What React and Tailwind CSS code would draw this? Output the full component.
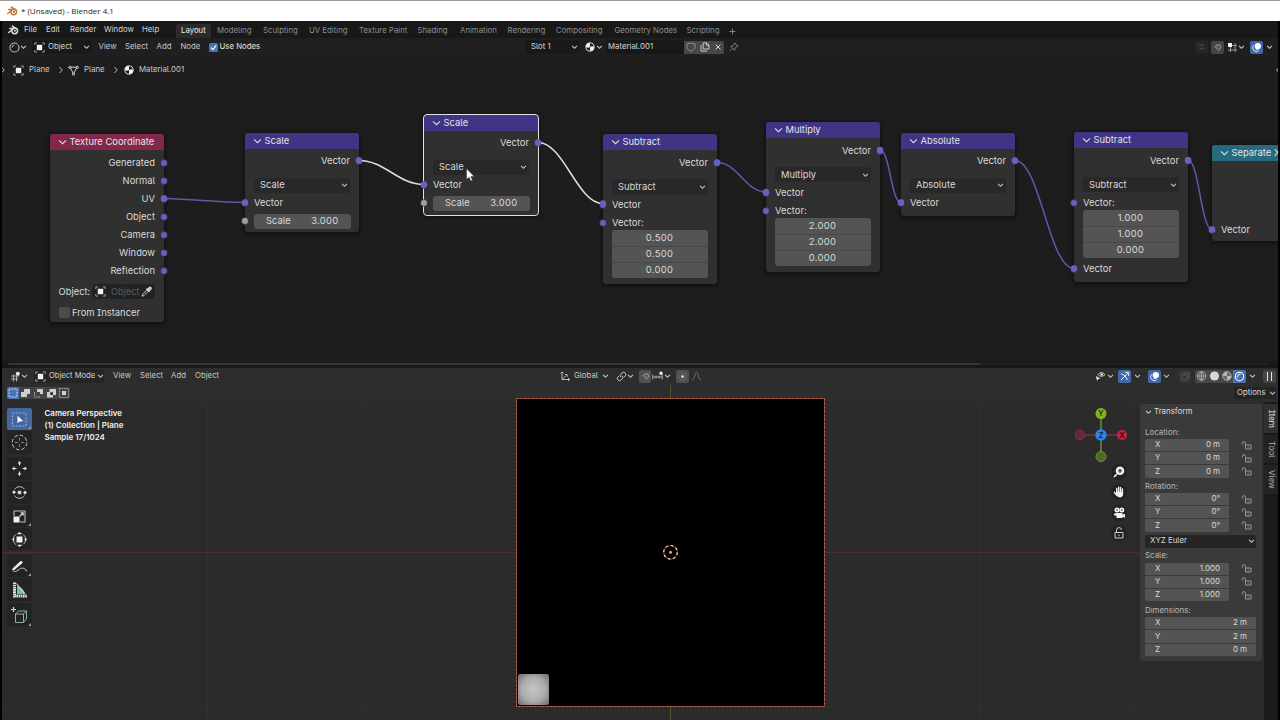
import React from "react";

/* ---------- small drawing helpers ---------- */

function Svg({ w, h, cls = "", children }) {
  return (
    <svg width={w} height={h} viewBox={`0 0 ${w} ${h}`} fill="none" className={`shrink-0 ${cls}`}>
      {children}
    </svg>
  );
}

function Chevron({ cls = "" }) {
  return (
    <Svg w={7} h={6} cls={cls}>
      <path d="M1.1 1.900l2.400 2.400L5.900 1.900" stroke="#c8c8c8" strokeWidth="1.1" />
    </Svg>
  );
}

function BigChevron({ cls = "" }) {
  return (
    <Svg w={9} h={8} cls={cls}>
      <path d="M1 2.3l3.5 3.4L8 2.3" stroke="#dcdcdc" strokeWidth="1.1" />
    </Svg>
  );
}

function RightChevron({ cls = "" }) {
  return (
    <Svg w={6} h={8} cls={cls}>
      <path d="M1.3 1l3 3-3 3" stroke="#bdbdbd" strokeWidth="1" />
    </Svg>
  );
}

function BlenderLogo({ color, center }) {
  return (
    <Svg w={11} h={10}>
      <circle cx="6.7" cy="5.8" r="2.9" stroke={color} strokeWidth="1.5" />
      <circle cx="6.9" cy="5.8" r="1" fill={center} />
      <path d="M.6 7.6l4.2-3.4M1.7 3.5h4.6M4.2 .9l4.2 3" stroke={color} strokeWidth="1.3" strokeLinecap="round" />
    </Svg>
  );
}

function ObjectIcon({ cls = "" }) {
  return (
    <Svg w={11} h={11} cls={cls}>
      <rect x="2.800" y="2.800" width="5.400" height="5.400" fill="#f2f2f2" />
      <path d="M.8 3V.9H3M8 .9h2.2V3M10.2 8v2.1H8M3 10.1H.8V8" stroke="#9c9c9c" strokeWidth="1" />
    </Svg>
  );
}

function MaterialIcon({ cls = "" }) {
  return (
    <Svg w={10} h={10} cls={cls}>
      <circle cx="5" cy="5" r="4.1" stroke="#e4e4e4" strokeWidth="1" />
      <path d="M5 .9a4.1 4.1 0 0 0-4.1 4.1c1.6 1 3 .8 4.1 0z" fill="#f2f2f2" />
      <path d="M5 5c1.3-1 3-1 4.1 0A4.1 4.1 0 0 1 5 9.1z" fill="#f2f2f2" />
    </Svg>
  );
}

function MeshIcon({ cls = "" }) {
  return (
    <Svg w={11} h={11} cls={cls}>
      <path d="M2 2.2h7L5.5 8.8z" stroke="#cfcfcf" strokeWidth="1" />
      <circle cx="1.9" cy="2.2" r="1.5" fill="#cfcfcf" />
      <circle cx="9.1" cy="2.2" r="1.5" fill="#cfcfcf" />
      <circle cx="5.5" cy="9" r="1.5" fill="#cfcfcf" />
      <circle cx="1.9" cy="2.2" r=".6" fill="#222" />
      <circle cx="9.1" cy="2.2" r=".6" fill="#222" />
      <circle cx="5.5" cy="9" r=".6" fill="#222" />
    </Svg>
  );
}

function ShaderEditorIcon() {
  return (
    <Svg w={11} h={11}>
      <circle cx="5.5" cy="5.5" r="4.5" stroke="#b9b9b9" strokeWidth="1.1" />
      <path d="M3 5.4A2.8 2.8 0 0 1 5.4 3" stroke="#b9b9b9" strokeWidth="1" />
      <path d="M8.8 2.2l1.3-1.3" stroke="#1d1d1d" strokeWidth="1.6" />
    </Svg>
  );
}

function MagnetIcon() {
  return (
    <Svg w={9} h={9}>
      <path d="M1.700 4.300L4 2.200a2.300 2.300 0 0 1 3.200 3.200L5 7.700M3.300 6L5 4.200" stroke="#8b8b8b" strokeWidth="1.4" />
    </Svg>
  );
}

function OverlayIcon() {
  return (
    <Svg w={11} h={11}>
      <circle cx="6.8" cy="4.2" r="3.1" fill="#fff" />
      <path d="M2.8 3.3A3.4 3.4 0 1 0 7.8 8.6" stroke="#e7ecf5" strokeWidth="1" />
      <path d="M4.6 7.4h2.2" stroke="#e7ecf5" strokeWidth="1" />
    </Svg>
  );
}

/* ---------- bars at the top ---------- */

const menus = [
  ["File", "w-[22px]"],
  ["Edit", "w-[24px]"],
  ["Render", "w-[34px]"],
  ["Window", "w-[38px]"],
  ["Help", "w-[33px]"],
];

const tabs = [
  ["Modeling", "w-[46px]"],
  ["Sculpting", "w-[46px]"],
  ["UV Editing", "w-[50px]"],
  ["Texture Paint", "w-[58.5px]"],
  ["Shading", "w-[42.5px]"],
  ["Animation", "w-[47.5px]"],
  ["Rendering", "w-[48.5px]"],
  ["Compositing", "w-[58.5px]"],
  ["Geometry Nodes", "w-[72px]"],
  ["Scripting", "w-[42px]"],
];

function TitleBar() {
  return (
    <div className="flex h-[21px] shrink-0 items-center border-t border-[#9d9ba0] bg-white pl-[7px] text-[8px] text-[#1c1c1c]">
      <BlenderLogo color="#c9752d" center="#2d5a9a" />
      <span className="ml-[3px] font-['Open_Sans',sans-serif] whitespace-pre">* (Unsaved) - Blender 4.1</span>
    </div>
  );
}

function MenuBar() {
  return (
    <div className="flex h-[17px] shrink-0 items-center bg-[#181818] pl-[8px] text-[7.800px] text-[#d2d2d2]">
      <BlenderLogo color="#dcdcdc" center="#dcdcdc" />
      <div className="ml-[5px] flex">
        {menus.map(([t, w]) => (
          <span key={t} className={`shrink-0 whitespace-nowrap ${w}`}>{t}</span>
        ))}
      </div>
      <div className="ml-[.5px] flex h-full items-end">
        <div className="flex h-[14px] w-[35px] items-center rounded-t-[2px] bg-[#2b2b2b] pl-[5.5px] text-[#eeeeee]">Layout</div>
        <div className="flex h-[14px] items-center pl-[6.500px] text-[#8e8e8e]">
          {tabs.map(([t, w]) => (
            <span key={t} className={`shrink-0 whitespace-nowrap ${w}`}>{t}</span>
          ))}
          <Svg w={7} h={7}>
            <path d="M3.5.5v6M.5 3.5h6" stroke="#8e8e8e" strokeWidth=".9" />
          </Svg>
        </div>
      </div>
    </div>
  );
}

function NodeHeader() {
  return (
    <div className="flex h-[19px] shrink-0 items-center bg-[#1f1f1f] pb-px pl-[9px] text-[7.800px] text-[#c6c6c6]">
      <ShaderEditorIcon />
      <Chevron />
      <div className="ml-[5px] flex h-[14px] w-[60px] items-center rounded-[2px] bg-[#191919] pl-[2px] text-[#d6d6d6]">
        <ObjectIcon />
        <span className="ml-[3px] w-[35px]">Object</span>
        <Chevron />
      </div>
      <span className="ml-[6.500px] w-[26.5px]">View</span>
      <span className="w-[31.5px]">Select</span>
      <span className="w-[24px]">Add</span>
      <span className="w-[28px]">Node</span>
      <Svg w={9} h={9}>
        <rect width="9" height="9" rx="1.5" fill="#4772b3" />
        <path d="M2 4.6l2 2L7.2 2.3" stroke="#fff" strokeWidth="1.2" />
      </Svg>
      <span className="ml-[2px] w-[305px] whitespace-nowrap text-[#e2e2e2]">Use Nodes</span>
      <div className="flex h-[14px] w-[55px] items-center rounded-[2px] bg-[#191919] pl-[6.500px] text-[#d6d6d6]">
        <span className="w-[40px]">Slot 1</span>
        <Chevron />
      </div>
      <MaterialIcon cls="ml-[5px]" />
      <Chevron cls="ml-[1px]" />
      <div className="ml-[3px] flex h-[14px] w-[78px] items-center rounded-l-[2px] bg-[#181818] pl-[2.5px] text-[#d6d6d6]">Material.001</div>
      <div className="flex h-[13px] w-[40px] items-center justify-around rounded-r-[2px] bg-[#474747]">
        <Svg w={10} h={10}>
          <path d="M5 .9L9 2v3.2C9 7.2 7 8.6 5 9.3 3 8.6 1 7.2 1 5.200V2z" stroke="#8f8f8f" strokeWidth="1" />
        </Svg>
        <Svg w={10} h={10}>
          <path d="M3.200.9h3.500L9 3v4H3.200zM6.400 1v2.300H9M1 3v6.100h6" stroke="#c9c9c9" strokeWidth="1" />
        </Svg>
        <Svg w={8} h={8}>
          <path d="M1.500 1.500l5 5m0-5l-5 5" stroke="#d4d4d4" strokeWidth="1" />
        </Svg>
      </div>
      <Svg w={10} h={10} cls="ml-[5px]">
        <path d="M5.700.9L9.100 4.300 7.700 4.600 6 6.300l-.3 2L1.800 4.300l2-.3L5.500 2.300zM3.500 6.400L.8 9.200" stroke="#8e8e8e" strokeWidth=".9" />
      </Svg>
      <div className="ml-auto flex h-[13px] items-center pr-[7.500px]">
        <div className="flex h-[12px] w-[12px] items-center justify-center bg-[#272727]">
          <Svg w={8} h={8}><path d="M1 2h6M1 5.500h6M4 1v6" stroke="#444" strokeWidth="1" /></Svg>
        </div>
        <div className="ml-[3px] flex h-[13px] w-[13px] items-center justify-center rounded-[2px] bg-[#454545]"><MagnetIcon /></div>
        <Svg w={11} h={11} cls="ml-[3px]">
          <path d="M3.500 3v7M8 1v9M3 3.500h7M1 8h9" stroke="#a2a2a2" strokeWidth=".9" />
          <rect x="1" y="1" width="4" height="4" fill="#f4f4f4" />
        </Svg>
        <Chevron />
        <div className="ml-[5px] flex h-[13px] w-[13px] items-center justify-center rounded-[2px] bg-[#4067a8]"><OverlayIcon /></div>
        <Chevron cls="ml-[3px]" />
      </div>
    </div>
  );
}

/* ---------- shader nodes ---------- */

const socketSides = {
  left: "left-[-4px]",
  right: "right-[-4px]",
};

function Socket({ side, grey }) {
  return (
    <svg className={`absolute top-[5px] ${socketSides[side]}`} width="8" height="8" viewBox="0 0 8 8">
      <circle cx="4" cy="4" r="3.400" fill={grey ? "#a1a1a1" : "#6c60bb"} stroke="#232038" strokeWidth=".5" />
    </svg>
  );
}

function Output({ label = "Vector" }) {
  return (
    <div className="relative flex h-[18px] items-center justify-end pr-[9px]">
      {label}
      <Socket side="right" />
    </div>
  );
}

function Input({ label = "Vector" }) {
  return (
    <div className="relative flex h-[18px] items-center pl-[9px]">
      {label}
      <Socket side="left" />
    </div>
  );
}

function Select({ label }) {
  return (
    <div className="mt-[6px] flex h-[18px] items-center px-[9px]">
      <div className="flex h-[15px] w-full items-center justify-between rounded-[3px] bg-[#282828] pr-[2px] pl-[6px]">
        {label}
        <Chevron />
      </div>
    </div>
  );
}

function ValueField() {
  return (
    <div className="relative flex h-[18px] items-center px-[8.500px]">
      <div className="flex h-[15px] w-full items-center justify-between rounded-[3px] bg-[#545454] pr-[12px] pl-[12.500px]">
        <span>Scale</span>
        <span className="tracking-[0.300px]">3.000</span>
      </div>
      <Socket side="left" grey />
    </div>
  );
}

function VectorFields({ values }) {
  return (
    <div className="mx-[9px] mt-[-1.500px] overflow-hidden rounded-[3px] bg-[#545454]">
      {values.map((v, i) => (
        <div key={i} className="flex h-[16px] items-center justify-center border-t border-[#464646] pr-[1px] pb-px tracking-[0.300px] first:border-transparent">
          {v}
        </div>
      ))}
    </div>
  );
}

function Node({ title, place, head = "bg-[#3f3584]", selected, children }) {
  return (
    <div
      className={`absolute w-[114px] rounded-[3px] bg-[#303030] text-[#dadada] shadow-[0_1px_4px_1px_rgba(0,0,0,0.500)] ${place} ${
        selected ? "outline outline-[1.300px] outline-[#e2e2e2]" : ""
      }`}
    >
      <div className={`flex h-[16px] items-center rounded-t-[3px] pl-[8px] whitespace-nowrap text-[#e4e4e4] ${head}`}>
        <BigChevron />
        <span className="ml-[2.500px]">{title}</span>
      </div>
      <div className="pt-[3.500px]">{children}</div>
    </div>
  );
}

const links = [
  { d: "M164 198.500C195 199 215 202.500 245 202.500", white: false },
  { d: "M359 160.500C385 160.500 398 184.500 424 184.500", white: true },
  { d: "M538 142.500C564 142.500 577 203.500 603 203.500", white: true },
  { d: "M717 162.500C738 162.500 745 192 766 192", white: false },
  { d: "M880 150C890 150 891 202.500 901 202.500", white: false },
  { d: "M1015 160.500C1040 160.500 1049 268.500 1074 268.500", white: false },
  { d: "M1188 160C1199 160 1201 229.500 1212 229.500", white: false },
];

function NodeEditor() {
  return (
    <div className="relative h-[305px] shrink-0 overflow-hidden bg-[#1d1d1d] text-[9.400px]">
      <div className="flex h-[26px] items-center text-[7.800px] text-[#c9c9c9]">
        <RightChevron />
        <ObjectIcon cls="ml-[7px]" />
        <span className="ml-[5px] w-[29px]">Plane</span>
        <RightChevron />
        <MeshIcon cls="ml-[4px]" />
        <span className="ml-[5px] w-[29px]">Plane</span>
        <RightChevron />
        <MaterialIcon cls="ml-[5px]" />
        <span className="ml-[5px]">Material.001</span>
        <Svg w={6} h={8} cls="ml-auto mr-[-1px]">
          <path d="M4.500 1l-3 3 3 3" stroke="#bdbdbd" strokeWidth="1" />
        </Svg>
      </div>

      <Node title="Texture Coordinate" place="left-[50px] top-[77px] h-[188px]" head="bg-[#81284c]">
        {["Generated", "Normal", "UV", "Object", "Camera", "Window", "Reflection"].map((l) => (
          <Output key={l} label={l} />
        ))}
        <div className="mt-[3px] flex h-[18px] items-center pl-[8.500px]">
          <span className="w-[33.500px]">Object:</span>
          <div className="flex h-[15px] w-[63px] items-center rounded-[3px] bg-[#222222] pl-[3px]">
            <ObjectIcon />
            <span className="ml-[5px] w-[29px] text-[9.200px] text-[#5c5c5c]">Object</span>
            <Svg w={13} h={13}>
              <path d="M2 11.200l.6-2L7 4.800l1.400 1.400L4 10.600z" stroke="#c9c9c9" strokeWidth="1" />
              <path d="M6.500 3.600l3.200 3.200M7.800 4.400l2-2a1.100 1.100 0 0 1 1.300 1.300l-2 2z" stroke="#dadada" strokeWidth="1.500" />
            </Svg>
          </div>
        </div>
        <div className="mt-[3px] flex h-[18px] items-center pl-[8.500px] whitespace-nowrap">
          <span className="mr-[2.500px] h-[11px] w-[11px] rounded-[2px] bg-[#4c4c4c]" />
          From Instancer
        </div>
      </Node>

      <Node title="Scale" place="left-[245px] top-[75.500px] h-[99.500px]">
        <Output />
        <Select label="Scale" />
        <Input />
        <ValueField />
      </Node>

      <Node title="Scale" place="left-[424px] top-[57.500px] h-[100px]" selected>
        <Output />
        <Select label="Scale" />
        <Input />
        <ValueField />
      </Node>

      <Node title="Subtract" place="left-[603px] top-[77px] h-[150px]">
        <Output />
        <Select label="Subtract" />
        <Input />
        <Input label="Vector:" />
        <VectorFields values={["0.500", "0.500", "0.000"]} />
      </Node>

      <Node title="Multiply" place="left-[766px] top-[65px] h-[150px]">
        <Output />
        <Select label="Multiply" />
        <Input />
        <Input label="Vector:" />
        <VectorFields values={["2.000", "2.000", "0.000"]} />
      </Node>

      <Node title="Absolute" place="left-[901px] top-[75.500px] h-[83.500px]">
        <Output />
        <Select label="Absolute" />
        <Input />
      </Node>

      <Node title="Subtract" place="left-[1074px] top-[75px] h-[150px]">
        <Output />
        <Select label="Subtract" />
        <Input label="Vector:" />
        <VectorFields values={["1.000", "1.000", "0.000"]} />
        <div className="mt-[1.500px]">
          <Input />
        </div>
      </Node>

      <Node title="Separate X" place="left-[1212px] top-[88px] h-[96px]" head="bg-[#266a80]">
        <div className="pt-[56px]">
          <Input />
        </div>
      </Node>

      <svg className="absolute inset-0" width="1280" height="305" viewBox="0 57 1280 305" fill="none">
        {links.map((l) => (
          <path key={l.d} d={l.d} stroke={l.white ? "#dedede" : "#6357a6"} strokeWidth="1.500" />
        ))}
        {links.map((l) => {
          const n = l.d.match(/[\d.]+/g).map(Number);
          return (
            <g key={l.d} fill="#6c60bb">
              <circle cx={n[0]} cy={n[1]} r="3.200" />
              <circle cx={n[6]} cy={n[7]} r="3.200" />
            </g>
          );
        })}
        <path d="M466.500 168.500v11l2.600-2.300 1.700 3.800 1.700-.8-1.700-3.600h3.400z" fill="#fff" stroke="#333" strokeWidth=".5" />
      </svg>
    </div>
  );
}

/* ---------- 3D viewport ---------- */

function ViewportHeader() {
  return (
    <div className="flex h-[16px] shrink-0 items-center bg-[#2d2d2d] pl-[10px] text-[7.800px] text-[#c6c6c6]">
      <Svg w={11} h={11}>
        <path d="M1 5h8M1 8h7M3.500 3.500v7M6.500 5v5.500" stroke="#bdbdbd" strokeWidth=".9" />
        <circle cx="7.800" cy="2.700" r="2" fill="#eee" />
      </Svg>
      <Chevron />
      <div className="ml-[6px] flex h-[14px] w-[70px] items-center rounded-[2px] bg-[#252525] pl-[1px] text-[#d6d6d6]">
        <ObjectIcon />
        <span className="ml-[3px] w-[48px] whitespace-nowrap text-[7.600px]">Object Mode</span>
        <Chevron />
      </div>
      <span className="ml-[9px] w-[27px]">View</span>
      <span className="w-[31px]">Select</span>
      <span className="w-[24px]">Add</span>
      <span className="w-[365px]">Object</span>
      <Svg w={11} h={10}>
        <path d="M2 1v7.500h7.500M2 8.500l4-4M.6 2.400L2 .9l1.400 1.500M5 3.600h2.200v2.200M8 7l1.600 1.500L8 9.900" stroke="#c6c6c6" strokeWidth=".9" />
      </Svg>
      <span className="ml-[3px] w-[28px]">Global</span>
      <Chevron />
      <Svg w={11} h={11} cls="ml-[7px]">
        <path d="M4.800 6.200a2.300 2.300 0 0 1 0-3L6.200 1.800a2.200 2.200 0 0 1 3.100 3.100L8 6.200M6.300 4.800a2.300 2.300 0 0 1 0 3L4.900 9.200a2.200 2.200 0 0 1-3.100-3.100L3 4.900" stroke="#c6c6c6" strokeWidth="1" />
      </Svg>
      <Chevron />
      <div className="ml-[5px] flex h-[13px] w-[12px] items-center justify-center rounded-[2px] bg-[#505050]"><MagnetIcon /></div>
      <Svg w={12} h={11} cls="ml-[1px]">
        <path d="M.8 3.500v5M4 4.500v3M7 4.500v3M10.200 3.500v5M.8 6h9.400" stroke="#b8b8b8" strokeWidth=".9" />
        <circle cx="9" cy="2.300" r="1.700" fill="#f0f0f0" />
      </Svg>
      <Chevron />
      <div className="ml-[5px] flex h-[13px] w-[13px] items-center justify-center rounded-[2px] bg-[#505050]">
        <Svg w={9} h={9}>
          <circle cx="4.500" cy="4.500" r="3.500" stroke="#6a6a6a" strokeWidth=".8" />
          <circle cx="4.500" cy="4.500" r="1.300" fill="#e8e8e8" />
        </Svg>
      </div>
      <Svg w={11} h={10} cls="ml-[2px]">
        <path d="M1 8.800C4 8.800 3.600 1.200 5.500 1.200S7 8.800 10 8.800" stroke="#767676" strokeWidth="1" />
      </Svg>
      <div className="ml-auto flex items-center pr-[4px]">
        <Svg w={12} h={11}>
          <path d="M3 3.600C4.500 1.200 8 .9 10 3.600 8 5.800 4.500 5.800 3 3.600z" stroke="#d6d6d6" strokeWidth="1" />
          <circle cx="6.600" cy="3.400" r="1.200" fill="#eee" />
          <path d="M1 5l1 5 1.200-2 2.300-.4z" fill="#eee" />
        </Svg>
        <Chevron />
        <div className="ml-[4px] flex h-[13px] w-[13px] items-center justify-center rounded-[2px] bg-[#4169aa]">
          <Svg w={10} h={10}>
            <path d="M1 9L8.500 1.500M5 1.300h3.700V5M1 2.800C4 3.400 6.600 6 7.200 9" stroke="#e5ebf5" strokeWidth="1" />
          </Svg>
        </div>
        <Chevron cls="ml-[3px]" />
        <div className="ml-[7px] flex h-[13px] w-[13px] items-center justify-center rounded-[2px] bg-[#4169aa]"><OverlayIcon /></div>
        <Chevron cls="ml-[2px]" />
        <div className="ml-[9px] flex h-[13px] w-[12px] items-center justify-center rounded-[2px] bg-[#363636]">
          <Svg w={9} h={9}><path d="M1 3h5v5H1zM3 3V1h5v5H6" stroke="#5c5c5c" strokeWidth=".9" /></Svg>
        </div>
        <div className="ml-[4px] flex h-[13px] items-center rounded-[2px] bg-[#484848]">
          <Svg w={13} h={12}>
            <circle cx="6.500" cy="6" r="4.300" stroke="#bdbdbd" strokeWidth=".9" />
            <path d="M2.200 6h8.600M6.500 1.700v8.600M6.500 1.700c-2.600 2.500-2.600 6 0 8.600M6.500 1.700c2.600 2.500 2.600 6 0 8.600" stroke="#bdbdbd" strokeWidth=".7" />
          </Svg>
          <Svg w={13} h={12}><circle cx="6.500" cy="6" r="4.600" fill="#d6d6d6" /></Svg>
          <Svg w={12} h={12}>
            <circle cx="6" cy="6" r="4.300" fill="#6a6a6a" stroke="#bdbdbd" strokeWidth=".8" />
            <path d="M6 1.700A4.300 4.300 0 0 0 1.700 6H6zM6 6h4.300A4.300 4.300 0 0 1 6 10.300z" fill="#b5b5b5" />
          </Svg>
          <div className="flex h-[13px] w-[13px] items-center justify-center rounded-r-[2px] bg-[#4772b3]">
            <Svg w={11} h={11}>
              <circle cx="5.500" cy="5.500" r="4.200" stroke="#fff" strokeWidth="1.100" />
              <path d="M3.200 6.500A3.200 3.200 0 0 1 6.600 3.200" stroke="#fff" strokeWidth="1" />
            </Svg>
          </div>
        </div>
        <Chevron cls="ml-[3px]" />
        <div className="ml-[7px] flex h-[13px] w-[13px] items-center justify-center gap-[2.500px] rounded-[2px] bg-[#454545]">
          <span className="h-[9px] w-[1.500px] bg-[#e2e2e2]" />
          <span className="h-[9px] w-[1.500px] bg-[#e2e2e2]" />
        </div>
      </div>
    </div>
  );
}

function SelectModes() {
  return (
    <div className="flex h-[18px] shrink-0 items-center bg-[#2d2d2d] pl-[7px]">
      <div className="flex h-[12px] items-center rounded-[2px] bg-[#444444]">
        <div className="flex h-[12px] w-[12px] items-center justify-center rounded-l-[2px] bg-[#4772b3]">
          <Svg w={10} h={10}><rect x="1" y="1" width="8" height="8" stroke="#dfe8f5" strokeWidth="1" strokeDasharray="1.500 1.200" /></Svg>
        </div>
        <Svg w={13} h={12}><path d="M5 2h6v5H8v3H2V5h3z" fill="#cfcfcf" /></Svg>
        <Svg w={13} h={12}>
          <path d="M5 2h6v5H8V5H5z" fill="#cfcfcf" />
          <path d="M2.500 5v5H8" stroke="#bdbdbd" strokeWidth=".9" strokeDasharray="1.300 1" />
        </Svg>
        <Svg w={13} h={12}>
          <path d="M4.500 2h6.500v6H8v2.500H2V5h2.500z" fill="#cfcfcf" />
          <path d="M5.200 5.200H8V8H5.200z" fill="#333" />
        </Svg>
        <Svg w={12} h={12}>
          <rect x="1.500" y="1.500" width="9" height="9" stroke="#b5b5b5" strokeWidth=".9" strokeDasharray="1.300 1" />
          <rect x="4" y="4" width="4" height="4" fill="#cfcfcf" />
        </Svg>
      </div>
      <div className="mr-[4px] ml-auto flex h-[12px] w-[42px] items-center rounded-[2px] bg-[#242424] pl-[3px] text-[7.800px] text-[#d6d6d6]">
        <span className="w-[32px]">Options</span>
        <Chevron />
      </div>
    </div>
  );
}

function ToolButton({ cls = "", corner, children }) {
  return (
    <div className={`relative flex w-[25px] items-center justify-center rounded-[2px] ${cls}`}>
      <Svg w={19} h={19}>{children}</Svg>
      {corner && (
        <svg className="absolute right-[1px] bottom-[1px]" width="3" height="3" viewBox="0 0 3 3"><path d="M3 0v3H0z" fill="#999" /></svg>
      )}
    </div>
  );
}

function Toolbar() {
  const dark = "bg-[#232323]";
  return (
    <div className="flex w-[25px] shrink-0 flex-col">
      <ToolButton cls="h-[22px] bg-[#4567a3]" corner>
        <rect x="2.500" y="3" width="13.500" height="13" stroke="#9db3d8" strokeWidth="1" strokeDasharray="2 1.500" />
        <path d="M7.500 5.800v7.400l2-1.600 3.600-.6z" fill="#fff" />
      </ToolButton>
      <ToolButton cls={`mt-px h-[23px] ${dark}`}>
        <circle cx="9.500" cy="9.500" r="7.300" stroke="#c8c8c8" strokeWidth="1" strokeDasharray="3.700 2.030" />
        <path d="M9.500 4.800v3M9.500 11.200v3M4.800 9.500h3M11.200 9.500h3" stroke="#8f8f8f" strokeWidth=".9" />
      </ToolButton>
      <ToolButton cls={`mt-[3px] h-[23px] ${dark}`}>
        <path d="M9.500 2l1.900 2.500H7.600zM9.500 17l1.900-2.500H7.600zM2 9.500l2.500-1.900v3.800zM17 9.500l-2.500-1.900v3.800z" fill="#e6e6e6" />
        <path d="M9.500 3.500v3M9.500 12.500v3M3.500 9.500h3M12.500 9.500h3" stroke="#e6e6e6" strokeWidth="1.100" />
      </ToolButton>
      <ToolButton cls={`mt-px h-[23px] ${dark}`}>
        <circle cx="9.500" cy="9.500" r="2" fill="#cfcfcf" />
        <path d="M4.500 6.400a6 6 0 0 1 10 0M14.500 12.600a6 6 0 0 1-10 0" stroke="#c8c8c8" strokeWidth="1" />
        <path d="M2.300 9.300h3.400L4 7.200zM13.300 9.500h3.400L15 11.700z" fill="#e6e6e6" />
        <circle cx="4" cy="9.300" r="1.400" fill="#e6e6e6" />
        <circle cx="15" cy="9.300" r="1.400" fill="#e6e6e6" />
      </ToolButton>
      <ToolButton cls={`mt-px h-[22px] ${dark}`} corner>
        <path d="M4 9V4h11v11h-5" stroke="#bdbdbd" strokeWidth="1.100" />
        <rect x="3.500" y="9.500" width="6" height="6" fill="#f2f2f2" />
        <path d="M9.500 9.500l3.500-3.500M10.500 5.800h2.700v2.700" stroke="#dcdcdc" strokeWidth="1.100" />
      </ToolButton>
      <ToolButton cls={`mt-px h-[22px] ${dark}`}>
        <circle cx="9.500" cy="9.500" r="6.200" stroke="#bdbdbd" strokeWidth="1" strokeDasharray="5 1.500" />
        <rect x="6.500" y="6.500" width="6" height="6" fill="#f2f2f2" />
        <path d="M9.500 1.800l1.800 2.400H7.700zM9.500 17.200l1.800-2.400H7.700zM1.800 9.500l2.400-1.800v3.600zM17.200 9.500l-2.400-1.800v3.600z" fill="#e6e6e6" />
      </ToolButton>
      <ToolButton cls={`mt-[5px] h-[22px] ${dark}`} corner>
        <path d="M3 11.500L11 4l1.500 1.500-8 7-2 .5z" fill="#f2f2f2" stroke="#f2f2f2" strokeWidth=".8" />
        <path d="M3 14c3 2 5-1.500 7.500-2.500S15.500 12 17 14.500" stroke="#7fa08f" strokeWidth="1.200" />
      </ToolButton>
      <ToolButton cls={`mt-px h-[23px] ${dark}`}>
        <path d="M4.500 2.500v13.500H17" stroke="#e0e4e0" strokeWidth="3" strokeDasharray="1.600 .6" />
        <path d="M7 14V6c4 .5 7 4 8 8z" fill="#6fc39a" />
        <path d="M6.500 3.500L15 14" stroke="#cfe6da" strokeWidth="1.100" />
      </ToolButton>
      <ToolButton cls={`mt-[2px] h-[24px] ${dark}`} corner>
        <path d="M5.500 8h8v8.500h-8zM5.500 8L8.500 5h8l-3 3M16.500 5v8l-3 3.500" stroke="#86b79f" strokeWidth="1" />
        <path d="M3.500 1v5M1 3.500h5" stroke="#b9e6cf" strokeWidth="1.200" />
      </ToolButton>
    </div>
  );
}

function Gizmo() {
  return (
    <svg className="mt-[4px] ml-[.5px]" width="52" height="54" viewBox="0 0 52 54" fill="none">
      <path d="M26 27V8M26 27v19" stroke="#7da52a" strokeWidth="1.200" />
      <path d="M7 27h38" stroke="#a8304c" strokeWidth="1.200" />
      <circle cx="26" cy="5.500" r="5.500" fill="#7cb51e" />
      <circle cx="26" cy="48.500" r="5" fill="#4c6b22" stroke="#6c9628" />
      <circle cx="4.800" cy="27" r="4.800" fill="#64293a" stroke="#8c2c45" />
      <circle cx="47" cy="27" r="5" fill="#cb2045" />
      <circle cx="26" cy="27" r="5.700" fill="#2f83e3" />
      <g fontFamily="Inter, sans-serif" fontSize="7.500" fontWeight="600" textAnchor="middle">
        <text x="26" y="8.300" fill="#1c2c06">Y</text>
        <text x="26" y="29.800" fill="#081f3d">Z</text>
        <text x="47" y="29.800" fill="#3c0512">X</text>
      </g>
    </svg>
  );
}

function NavButtons() {
  return (
    <div className="mt-[2px] flex flex-col items-center gap-[4.300px] self-end">
      <div className="flex h-[16px] w-[16px] items-center justify-center rounded-full bg-[#222222]">
        <Svg w={12} h={12}>
          <circle cx="7" cy="4.800" r="4.300" fill="#f2f2f2" />
          <path d="M7 2.700v4.200M4.900 4.800h4.200" stroke="#222" strokeWidth="1.100" />
          <path d="M4 8l-3 3" stroke="#f2f2f2" strokeWidth="1.700" />
        </Svg>
      </div>
      <div className="flex h-[16px] w-[16px] items-center justify-center rounded-full bg-[#222222]">
        <Svg w={12} h={12}>
          <path d="M3.700 7V2.500M5.600 6V1.200M7.500 6V1.500M9.400 7V3M1.300 6.200L3.500 9" stroke="#f2f2f2" strokeWidth="1.400" strokeLinecap="round" />
          <path d="M3 5.800h7.100v2.400c0 2-1.300 3.200-3.300 3.200-2 0-3.200-1.200-3.800-2.800z" fill="#f2f2f2" />
        </Svg>
      </div>
      <div className="flex h-[16px] w-[16px] items-center justify-center rounded-full bg-[#222222]">
        <Svg w={13} h={12}>
          <circle cx="4" cy="3" r="2.500" fill="#f2f2f2" />
          <circle cx="8.800" cy="3" r="2.500" fill="#f2f2f2" />
          <circle cx="4" cy="3" r=".8" fill="#222" />
          <circle cx="8.800" cy="3" r=".8" fill="#222" />
          <path d="M3.500 6h6v1.800l2.500-1v4l-2.500-1v1.200h-6V8.500H1V6.800z" fill="#f2f2f2" />
        </Svg>
      </div>
      <div className="flex h-[16px] w-[16px] items-center justify-center rounded-full bg-[#222222]">
        <Svg w={12} h={12}>
          <path d="M2 5.500h8V11H2zM3.500 5.500V3.200a2.500 2.500 0 0 1 5-.2M6 7.500v1.700" stroke="#cfcfcf" strokeWidth="1" />
        </Svg>
      </div>
    </div>
  );
}

function LockIcon() {
  return (
    <Svg w={11} h={9}>
      <path d="M4.500 4h5.500v4H4.500zM4.500 4V2.300A1.600 1.600 0 0 0 1.300 2.300V3.500M7.200 5.500v1.200" stroke="#989898" strokeWidth="1" />
    </Svg>
  );
}

function PanelGroup({ label, values, lock, gap }) {
  return (
    <div className={gap}>
      <div className="flex h-[13px] items-center text-[#b9b9b9]">{label}</div>
      <div className="flex">
        <div className={`flex flex-col gap-px overflow-hidden rounded-[2px] ${lock ? "w-[84px]" : "w-[111px]"}`}>
          {values.map((v, i) => (
            <div key={i} className="flex h-[12.200px] items-center justify-between bg-[#545454] pr-[9px] pl-[10px] text-[#dadada]">
              <span>{"XYZ"[i]}</span>
              <span>{v}</span>
            </div>
          ))}
        </div>
        {lock && (
          <div className="ml-[12px] flex flex-col gap-px">
            {values.map((_, i) => (
              <div key={i} className="flex h-[12.200px] items-center"><LockIcon /></div>
            ))}
          </div>
        )}
      </div>
    </div>
  );
}

function TransformPanel() {
  return (
    <div className="mt-[2px] h-[257px] w-[122px] shrink-0 rounded-[3px] bg-[#3a3a3a] pl-[5px] text-[7.900px]">
      <div className="flex h-[16px] items-center text-[#dedede]">
        <Chevron />
        <span className="ml-[2px]">Transform</span>
      </div>
      <PanelGroup label="Location:" values={["0 m", "0 m", "0 m"]} lock gap="mt-[6px]" />
      <PanelGroup label="Rotation:" values={["0°", "0°", "0°"]} lock gap="mt-[2.500px]" />
      <div className="mt-[3px] flex h-[13px] w-[111px] items-center justify-between rounded-[2px] bg-[#252525] pr-[1px] pl-[5px] text-[#dadada]">
        XYZ Euler
        <Chevron />
      </div>
      <PanelGroup label="Scale:" values={["1.000", "1.000", "1.000"]} lock gap="mt-[2px]" />
      <PanelGroup label="Dimensions:" values={["2 m", "2 m", "0 m"]} gap="mt-[3px]" />
    </div>
  );
}

function SideTabs() {
  return (
    <div className="ml-[2px] flex w-[16px] shrink-0 flex-col gap-[2px] bg-[#1a1a1a] pt-[2px] text-[8px] text-[#b5b5b5]">
      <div className="flex h-[29px] items-center justify-center bg-[#303030] text-[#e6e6e6] [writing-mode:vertical-rl]">Item</div>
      <div className="flex h-[28px] items-center justify-center bg-[#232323] [writing-mode:vertical-rl]">Tool</div>
      <div className="flex h-[29px] items-center justify-center bg-[#232323] [writing-mode:vertical-rl]">View</div>
    </div>
  );
}

function Viewport() {
  return (
    <div className="relative flex min-h-0 flex-1 flex-col overflow-hidden bg-[#2b2b2b]">
      <ViewportHeader />
      <SelectModes />
      <svg className="absolute inset-0" width="1280" height="352" viewBox="0 368 1280 352" fill="none">
        <path d="M207.500 402v318M362.500 402v318M979.500 402v318M1133.500 402v318M0 706.500h1266" stroke="#303030" strokeWidth="1" />
        <path d="M0 552.500h1140" stroke="#4c2c2f" strokeWidth="1" />
        <path d="M670.500 385v13M670.500 707v13" stroke="#4c5c26" strokeWidth="1" />
        <rect x="516.500" y="398.500" width="308" height="308" fill="#000" stroke="#7a4030" strokeWidth="1" />
        <rect x="516.500" y="398.500" width="308" height="308" stroke="#bd6a4e" strokeWidth="1" strokeDasharray="2 2" />
        <defs>
          <radialGradient id="patch" cx=".5" cy=".5" r=".7">
            <stop offset="0" stopColor="#c4c6c6" />
            <stop offset=".55" stopColor="#acacac" />
            <stop offset="1" stopColor="#6a6a6a" />
          </radialGradient>
          <filter id="soft"><feGaussianBlur stdDeviation=".7" /></filter>
        </defs>
        <rect x="518" y="674" width="31" height="31" rx="2" fill="url(#patch)" filter="url(#soft)" />
        <circle cx="670.500" cy="552.300" r="6.800" stroke="#7c2c20" strokeWidth="1.200" />
        <circle cx="670.500" cy="552.300" r="6.800" stroke="#f2dcd0" strokeWidth="1.200" strokeDasharray="2.670 2.670" />
        <circle cx="670.500" cy="552.300" r="1.500" fill="#f0a860" />
      </svg>
      <div className="relative flex flex-1 pt-[6px] pl-[7px]">
        <Toolbar />
        <div className="mt-[-1px] ml-[12.500px] text-[7.950px] leading-[12px] font-semibold text-[#f0f0f0]">
          <p>Camera Perspective</p>
          <p>(1) Collection | Plane</p>
          <p>Sample 17/1024</p>
        </div>
        <div className="mt-[-6px] ml-auto flex">
          <div className="mt-[2px] mr-[13px] flex w-[53px] flex-col">
            <Gizmo />
            <NavButtons />
          </div>
          <TransformPanel />
          <SideTabs />
        </div>
      </div>
    </div>
  );
}

export default function App() {
  return (
    <div className="relative flex h-[720px] w-[1280px] flex-col overflow-hidden bg-[#181818] font-['Inter',sans-serif] leading-none [font-feature-settings:'cv05','cv08']">
      <TitleBar />
      <MenuBar />
      <NodeHeader />
      <NodeEditor />
      <div className="flex h-[6px] shrink-0 bg-[#181818] pt-px pl-[8px]">
        <div className="h-[2px] w-[972px] rounded-full bg-[#363636]" />
        <div className="h-[2px] w-[288px] bg-[#222222]" />
      </div>
      <Viewport />
      <div className="absolute top-[21px] bottom-0 left-0 w-[2px] bg-black" />
      <div className="absolute top-[21px] right-0 bottom-0 w-[2px] bg-black" />
    </div>
  );
}
